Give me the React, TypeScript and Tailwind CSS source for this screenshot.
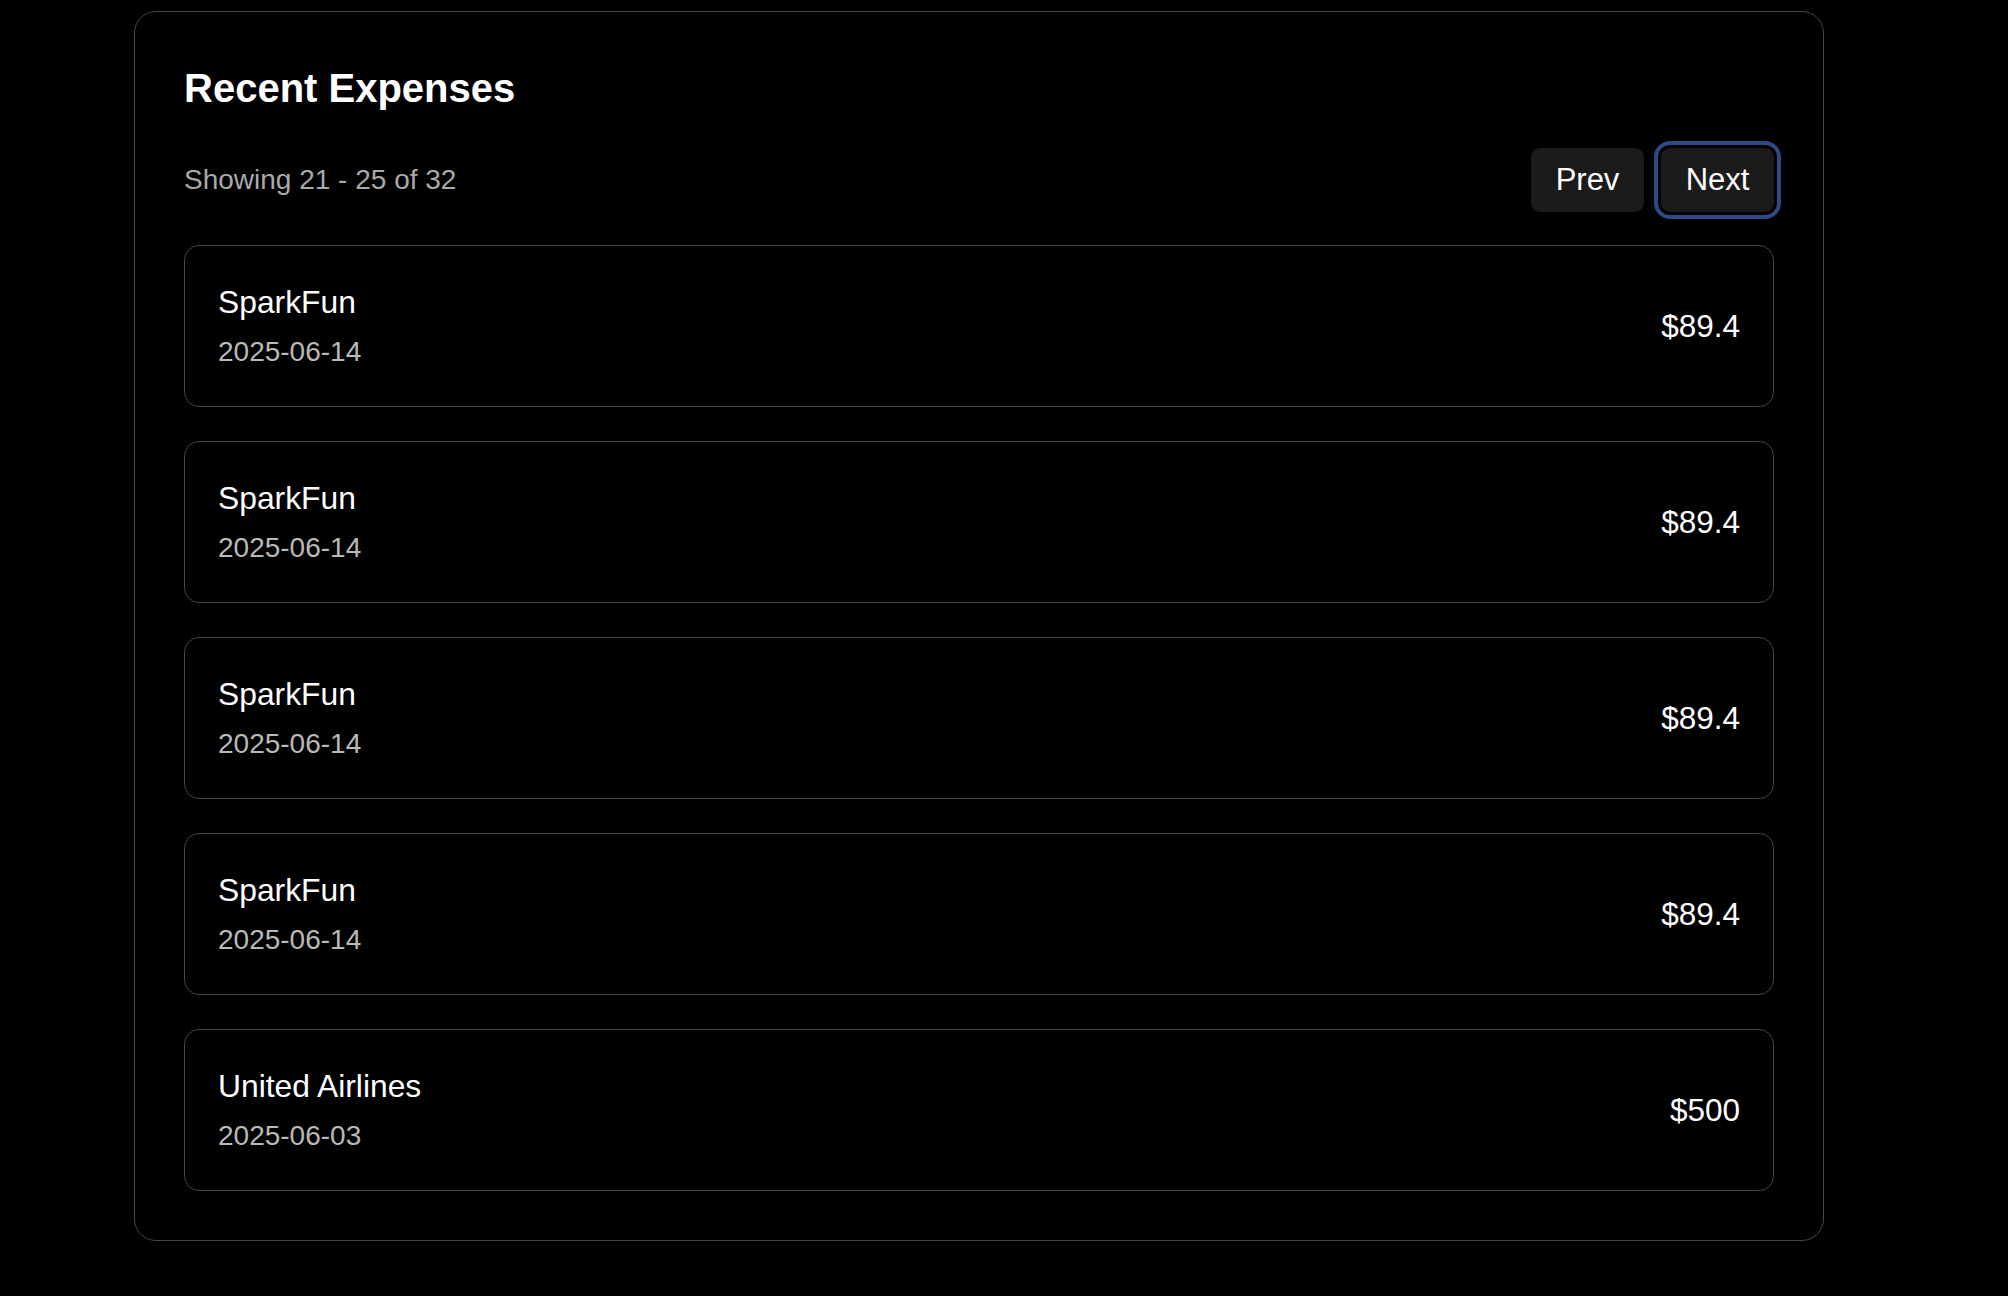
import React from "react";

type Expense = {
  vendor: string;
  date: string;
  amount: string;
};

const expenses: Expense[] = [
  { vendor: "SparkFun", date: "2025-06-14", amount: "$89.4" },
  { vendor: "SparkFun", date: "2025-06-14", amount: "$89.4" },
  { vendor: "SparkFun", date: "2025-06-14", amount: "$89.4" },
  { vendor: "SparkFun", date: "2025-06-14", amount: "$89.4" },
  { vendor: "United Airlines", date: "2025-06-03", amount: "$500" },
];

const ExpenseRow = ({ expense }: { expense: Expense }) => (
  <div className="flex h-[162px] items-center justify-between rounded-[15px] border border-[#454545] px-[33px]">
    <div className="flex flex-col gap-[16px]">
      <span className="text-[31.8px] leading-[36px] text-white">{expense.vendor}</span>
      <span className="text-[28px] leading-[32px] text-[#b9b9b9]">{expense.date}</span>
    </div>
    <span className="text-[31.5px] leading-[36px] text-white">{expense.amount}</span>
  </div>
);

export default function App() {
  return (
    <div className="min-h-screen bg-black pt-[11px] font-['Liberation_Sans',Arial,sans-serif]">
      <div className="ml-[134px] w-[1690px] rounded-[22px] border border-[#454545] px-[49px] pt-[53px] pb-[49px]">
        <h2 className="text-[40px] leading-[46px] font-bold text-white">Recent Expenses</h2>

        <div className="mt-[37px] mb-[33px] flex h-[64px] items-center justify-between">
          <span className="text-[28px] leading-[32px] text-[#a9a9a9]">Showing 21 - 25 of 32</span>
          <div className="flex gap-[17px]">
            <button className="h-[64px] w-[113px] rounded-[9px] bg-[#1b1b1b] text-[31px] text-white">
              Prev
            </button>
            <button className="h-[64px] w-[113px] rounded-[9px] bg-[#1b1b1b] text-[31px] text-white outline-[4px] outline-offset-[3px] outline-[#2b4a86] outline-solid">
              Next
            </button>
          </div>
        </div>

        <div className="flex flex-col gap-[34px]">
          {expenses.map((e, i) => (
            <ExpenseRow key={i} expense={e} />
          ))}
        </div>
      </div>
    </div>
  );
}
